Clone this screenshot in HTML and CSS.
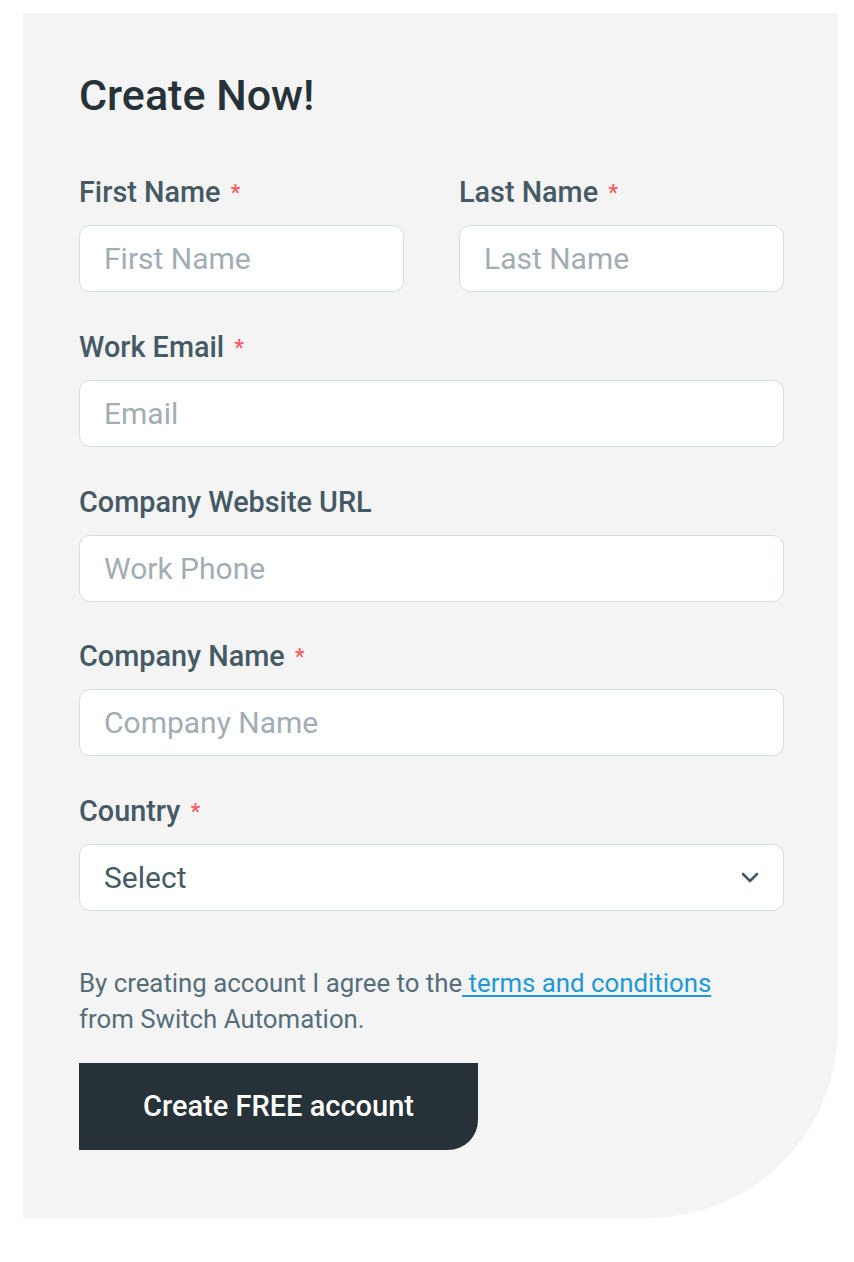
FILE: index.html
```html
<!DOCTYPE html>
<html lang="en">
<head>
<meta charset="utf-8">
<title>Create Now!</title>
<link rel="stylesheet" href="styles.css">
</head>
<body>
<main class="card">
  <h1 class="title">Create Now!</h1>
  <form class="form">
    <div class="row">
      <div class="field">
        <label class="label">First Name <span class="req">*</span></label>
        <input class="input" type="text" placeholder="First Name">
      </div>
      <div class="field">
        <label class="label">Last Name <span class="req">*</span></label>
        <input class="input" type="text" placeholder="Last Name">
      </div>
    </div>
    <div class="field">
      <label class="label">Work Email <span class="req">*</span></label>
      <input class="input" type="email" placeholder="Email">
    </div>
    <div class="field">
      <label class="label">Company Website URL</label>
      <input class="input" type="text" placeholder="Work Phone">
    </div>
    <div class="field">
      <label class="label">Company Name <span class="req">*</span></label>
      <input class="input" type="text" placeholder="Company Name">
    </div>
    <div class="field">
      <label class="label">Country <span class="req">*</span></label>
      <div class="select">
        <span class="select-text">Select</span>
        <svg class="chevron" width="18" height="11" viewBox="0 0 18 11"><path d="M2 2 L9 9 L16 2" fill="none" stroke="#455a64" stroke-width="2.6" stroke-linecap="round" stroke-linejoin="round"/></svg>
      </div>
    </div>
    <p class="terms">By creating account I agree to the<a class="link" href="#"> terms and conditions</a><br>from Switch Automation.</p>
    <button class="btn" type="button">Create FREE account</button>
  </form>
</main>
</body>
</html>
```
FILE: styles.css
```css
html, body {
  margin: 0;
  padding: 0;
  background: #ffffff;
}
body {
  font-family: Roboto, "Noto Sans", "Liberation Sans", sans-serif;
}
.card {
  box-sizing: border-box;
  width: 815px;
  height: 1205px;
  margin: 13px 0 0 23px;
  padding: 0 54px 0 56px;
  background: #f4f4f4;
  border-bottom-right-radius: 190px;
  overflow: hidden;
}
.title {
  margin: 0;
  padding-top: 57px;
  font-size: 43px;
  line-height: 50px;
  font-weight: 500;
  color: #263238;
}
.form {
  display: flex;
  flex-direction: column;
  gap: 37.75px;
  margin-top: 55px;
}
.row {
  display: grid;
  grid-template-columns: 1fr 1fr;
  column-gap: 55px;
}
.field {
  display: flex;
  flex-direction: column;
  gap: 16px;
}
.label {
  height: 34px;
  font-size: 28.8px;
  line-height: 34px;
  font-weight: 500;
  color: #455a64;
}
.req {
  color: #ff5a5f;
  font-size: 22px;
  line-height: 0;
  vertical-align: 2px;
  margin-left: 3px;
}
.input, .select {
  box-sizing: border-box;
  width: 100%;
  height: 67px;
  padding: 0 24px;
  border: 1.5px solid #d7dee2;
  border-radius: 11px;
  background: #ffffff;
  font-family: Roboto, "Noto Sans", "Liberation Sans", sans-serif;
  font-size: 30px;
  color: #455a64;
  outline: none;
}
.input::placeholder {
  color: #a3adb4;
  opacity: 1;
}
.select {
  display: flex;
  align-items: center;
  justify-content: space-between;
  padding-right: 24px;
}
.select-text {
  color: #455a64;
}
.chevron {
  display: block;
}
.terms {
  margin: 16px 0 0;
  font-size: 25.8px;
  line-height: 36px;
  color: #546e7a;
}
.link {
  color: #1d9ad6;
  text-decoration: underline;
  text-underline-offset: 3px;
}
.btn {
  align-self: flex-start;
  width: 399px;
  height: 87px;
  margin-top: -12px;
  border: none;
  border-radius: 0 0 30px 0;
  background: #263238;
  color: #ffffff;
  font-family: Roboto, "Noto Sans", "Liberation Sans", sans-serif;
  font-size: 29px;
  font-weight: 500;
  padding: 0;
  cursor: pointer;
}
```
